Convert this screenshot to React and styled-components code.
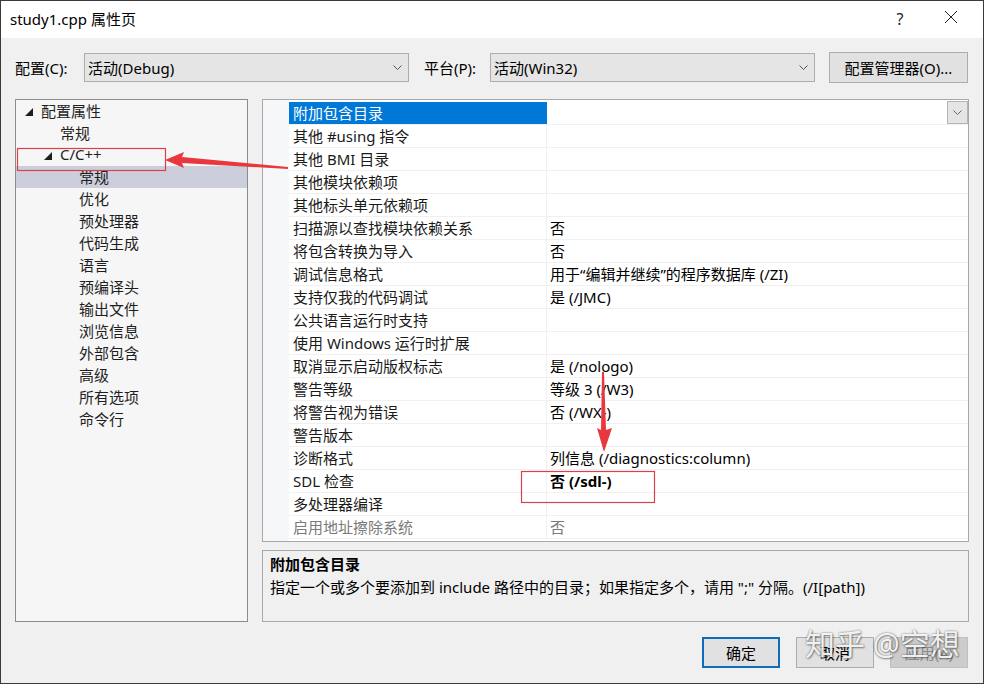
import React from 'react';
import styled, { createGlobalStyle, css } from 'styled-components';

const FONT = `"Noto Sans", "Noto Sans CJK SC", sans-serif`;

const Global = createGlobalStyle`
  html, body { margin: 0; padding: 0; background: #ffffff; }
  body { font-family: ${FONT}; }
  * { box-sizing: border-box; }
`;

const Window = styled.div`
  position: relative;
  width: 984px;
  height: 684px;
  border: 1px solid #3a3a3a;
  background: #f0f0f0;
  display: flex;
  flex-direction: column;
  font-family: ${FONT};
  font-size: 15px;
  color: #1a1a1a;
  overflow: hidden;
`;

const TitleBar = styled.div`
  height: 37px;
  flex: none;
  background: #ffffff;
  display: flex;
  align-items: center;
  padding-left: 9px;
`;

const Title = styled.div`
  flex: 1;
  font-size: 15px;
  line-height: 20px;
  color: #000;
  margin-top: -2px;
`;

const Help = styled.div`
  width: 20px;
  margin-right: 34px;
  font-size: 16px;
  color: #222;
  text-align: center;
  margin-top: -2px;
`;

const CloseBtn = styled.div`
  width: 14px;
  height: 14px;
  margin-right: 25px;
  margin-top: -6px;
  display: flex;
`;

const Body = styled.div`
  flex: 1;
  display: flex;
  flex-direction: column;
  padding: 14px 14px 15px 14px;
`;

const ConfigRow = styled.div`
  height: 31px;
  flex: none;
  display: flex;
  align-items: center;
`;

const Label = styled.div`
  flex: none;
  width: ${(p) => p.$w}px;
  margin-left: ${(p) => p.$ml || 0}px;
  white-space: nowrap;
  color: #000;
`;

const Combo = styled.div`
  flex: none;
  width: ${(p) => p.$w}px;
  height: 29px;
  background: #e5e5e5;
  border: 1px solid #adadad;
  display: flex;
  align-items: center;
  padding: 0 6px 0 3px;
  color: #000;
`;

const ComboText = styled.div`
  flex: 1;
  white-space: nowrap;
`;

const Button = styled.div`
  flex: none;
  width: ${(p) => p.$w}px;
  height: 31px;
  margin-left: ${(p) => p.$ml || 0}px;
  background: ${(p) => (p.$disabled ? '#cccccc' : '#e1e1e1')};
  border: ${(p) => (p.$primary ? '2px solid #0f6cbd' : p.$disabled ? '1px solid #bfbfbf' : '1px solid #adadad')};
  color: ${(p) => (p.$disabled ? '#8a8a8a' : '#000')};
  display: flex;
  align-items: center;
  justify-content: center;
  white-space: nowrap;
`;

const Main = styled.div`
  margin-top: 16px;
  flex: 1;
  display: flex;
  gap: 14px;
  min-height: 0;
`;

const Tree = styled.div`
  width: 233px;
  flex: none;
  background: #f6f6f6;
  border: 1px solid #8c8c8c;
  padding-top: 0;
`;

const TreeRow = styled.div`
  height: 22px;
  display: flex;
  align-items: center;
  padding-bottom: 2px;
  padding-left: ${(p) => (p.$expander ? 9 : 25) + p.$level * 19}px;
  background: ${(p) => (p.$selected ? '#cccedb' : 'transparent')};
  color: #1e1e1e;
  white-space: nowrap;
`;

const Expander = styled.span`
  width: 16px;
  flex: none;
  display: flex;
  align-items: center;
  padding-top: 3px;
`;

const RightCol = styled.div`
  flex: 1;
  display: flex;
  flex-direction: column;
  gap: 8px;
  min-width: 0;
`;

const Grid = styled.div`
  flex: 1;
  border: 1px solid #a8a8a8;
  background: #ffffff;
  display: flex;
  min-height: 0;
`;

const Gutter = styled.div`
  width: 26px;
  flex: none;
  background: #f6f7f9;
`;

const Rows = styled.div`
  flex: 1;
  padding-top: 2px;
  display: flex;
  flex-direction: column;
`;

const Row = styled.div`
  height: 23px;
  flex: none;
  display: flex;
  border-bottom: 1px solid #f0f0f0;
`;

const NameCell = styled.div`
  width: 258px;
  flex: none;
  padding-left: 4px;
  line-height: 22px;
  white-space: nowrap;
  border-right: 1px solid #f0f0f0;
  ${(p) =>
    p.$selected &&
    css`
      background: #0078d7;
      color: #ffffff;
      border-right-color: #0078d7;
    `}
  ${(p) => p.$disabled && css`color: #7a7a7a;`}
`;

const ValueCell = styled.div`
  flex: 1;
  display: flex;
  align-items: center;
  padding-left: 3px;
  line-height: 22px;
  white-space: nowrap;
  font-weight: ${(p) => (p.$bold ? 700 : 400)};
  color: ${(p) => (p.$disabled ? '#7a7a7a' : '#000')};
`;

const ValueText = styled.span`
  flex: 1;
`;

const DropBtn = styled.div`
  width: 21px;
  height: 23px;
  margin-top: -1px;
  flex: none;
  background: #e5e5e5;
  border: 1px solid #b4b4b4;
  display: flex;
  align-items: center;
  justify-content: center;
`;

const Desc = styled.div`
  height: 72px;
  flex: none;
  border: 1px solid #a8a8a8;
  background: #f0f0f0;
  padding: 2px 7px 0;
  line-height: 23px;
  color: #000;
`;

const DescTitle = styled.div`
  font-weight: 700;
`;

const DescText = styled.div`
  white-space: nowrap;
`;

const Footer = styled.div`
  margin-top: 15px;
  height: 31px;
  flex: none;
  display: flex;
  justify-content: flex-end;
  gap: 16px;
  padding-right: 1px;
`;

const Watermark = styled.div`
  position: absolute;
  left: 804px;
  top: 625px;
  font-size: 30px;
  line-height: 36px;
  color: rgba(255, 255, 255, 0.92);
  text-shadow: 0 0 2px rgba(0, 0, 0, 0.55), 1px 1px 2px rgba(0, 0, 0, 0.35);
  white-space: nowrap;
  pointer-events: none;
`;

const Annotations = styled.svg`
  position: absolute;
  left: -1px;
  top: -1px;
  width: 984px;
  height: 684px;
  pointer-events: none;
`;

const Chevron = ({ color = '#555' }) => (
  <svg width="9" height="5" viewBox="0 0 9 5">
    <polyline points="0.5,0.5 4.5,4.5 8.5,0.5" fill="none" stroke={color} strokeWidth="1" />
  </svg>
);

const Tri = () => (
  <svg width="8" height="8" viewBox="0 0 8 8">
    <polygon points="8,0 8,8 0,8" fill="#1e1e1e" />
  </svg>
);

const treeItems = [
  { t: '配置属性', level: 0, exp: true },
  { t: '常规', level: 1 },
  { t: 'C/C++', level: 1, exp: true },
  { t: '常规', level: 2, sel: true },
  { t: '优化', level: 2 },
  { t: '预处理器', level: 2 },
  { t: '代码生成', level: 2 },
  { t: '语言', level: 2 },
  { t: '预编译头', level: 2 },
  { t: '输出文件', level: 2 },
  { t: '浏览信息', level: 2 },
  { t: '外部包含', level: 2 },
  { t: '高级', level: 2 },
  { t: '所有选项', level: 2 },
  { t: '命令行', level: 2 },
];

const props = [
  { n: '附加包含目录', v: '', sel: true },
  { n: '其他 #using 指令', v: '' },
  { n: '其他 BMI 目录', v: '' },
  { n: '其他模块依赖项', v: '' },
  { n: '其他标头单元依赖项', v: '' },
  { n: '扫描源以查找模块依赖关系', v: '否' },
  { n: '将包含转换为导入', v: '否' },
  { n: '调试信息格式', v: '用于“编辑并继续”的程序数据库 (/ZI)' },
  { n: '支持仅我的代码调试', v: '是 (/JMC)' },
  { n: '公共语言运行时支持', v: '' },
  { n: '使用 Windows 运行时扩展', v: '' },
  { n: '取消显示启动版权标志', v: '是 (/nologo)' },
  { n: '警告等级', v: '等级 3 (/W3)' },
  { n: '将警告视为错误', v: '否 (/WX-)' },
  { n: '警告版本', v: '' },
  { n: '诊断格式', v: '列信息 (/diagnostics:column)' },
  { n: 'SDL 检查', v: '否 (/sdl-)', bold: true },
  { n: '多处理器编译', v: '' },
  { n: '启用地址擦除系统', v: '否', dis: true },
];

export default function App() {
  return (
    <>
      <Global />
      <Window>
        <TitleBar>
          <Title>study1.cpp 属性页</Title>
          <Help>?</Help>
          <CloseBtn>
            <svg width="14" height="14" viewBox="0 0 14 14">
              <line x1="1" y1="1" x2="13" y2="13" stroke="#222" strokeWidth="1" />
              <line x1="13" y1="1" x2="1" y2="13" stroke="#222" strokeWidth="1" />
            </svg>
          </CloseBtn>
        </TitleBar>
        <Body>
          <ConfigRow>
            <Label $w={69}>配置(C):</Label>
            <Combo $w={325}>
              <ComboText>活动(Debug)</ComboText>
              <Chevron />
            </Combo>
            <Label $w={66} $ml={15}>平台(P):</Label>
            <Combo $w={325}>
              <ComboText>活动(Win32)</ComboText>
              <Chevron />
            </Combo>
            <Button $w={139} $ml={14}>配置管理器(O)...</Button>
          </ConfigRow>
          <Main>
            <Tree>
              {treeItems.map((it, i) => (
                <TreeRow key={i} $level={it.level} $expander={it.exp} $selected={it.sel}>
                  {it.exp && (
                    <Expander>
                      <Tri />
                    </Expander>
                  )}
                  {it.t}
                </TreeRow>
              ))}
            </Tree>
            <RightCol>
              <Grid>
                <Gutter />
                <Rows>
                  {props.map((p, i) => (
                    <Row key={i}>
                      <NameCell $selected={p.sel} $disabled={p.dis}>
                        {p.n}
                      </NameCell>
                      <ValueCell $bold={p.bold} $disabled={p.dis}>
                        <ValueText>{p.v}</ValueText>
                        {p.sel && (
                          <DropBtn>
                            <Chevron color="#666" />
                          </DropBtn>
                        )}
                      </ValueCell>
                    </Row>
                  ))}
                </Rows>
              </Grid>
              <Desc>
                <DescTitle>附加包含目录</DescTitle>
                <DescText>指定一个或多个要添加到 include 路径中的目录；如果指定多个，请用 ";" 分隔。(/I[path])</DescText>
              </Desc>
            </RightCol>
          </Main>
          <Footer>
            <Button $w={78} $primary>确定</Button>
            <Button $w={78}>取消</Button>
            <Button $w={78} $disabled>应用(A)</Button>
          </Footer>
        </Body>
        <Watermark>知乎 @空想</Watermark>
        <Annotations viewBox="0 0 984 684">
          <rect x="17.5" y="148.5" width="148" height="22" fill="none" stroke="#d8414a" strokeWidth="1.2" />
          <polygon points="165,160 184,152 182,157 288,167 288,169 182,163 184,168" fill="#e8383d" />
          <rect x="521.5" y="471.5" width="133" height="31" fill="none" stroke="#d8414a" strokeWidth="1.2" />
          <polygon points="602,372 604,372 606,430 612,428 604,452 597,428 601,430" fill="#e8383d" />
        </Annotations>
      </Window>
    </>
  );
}
